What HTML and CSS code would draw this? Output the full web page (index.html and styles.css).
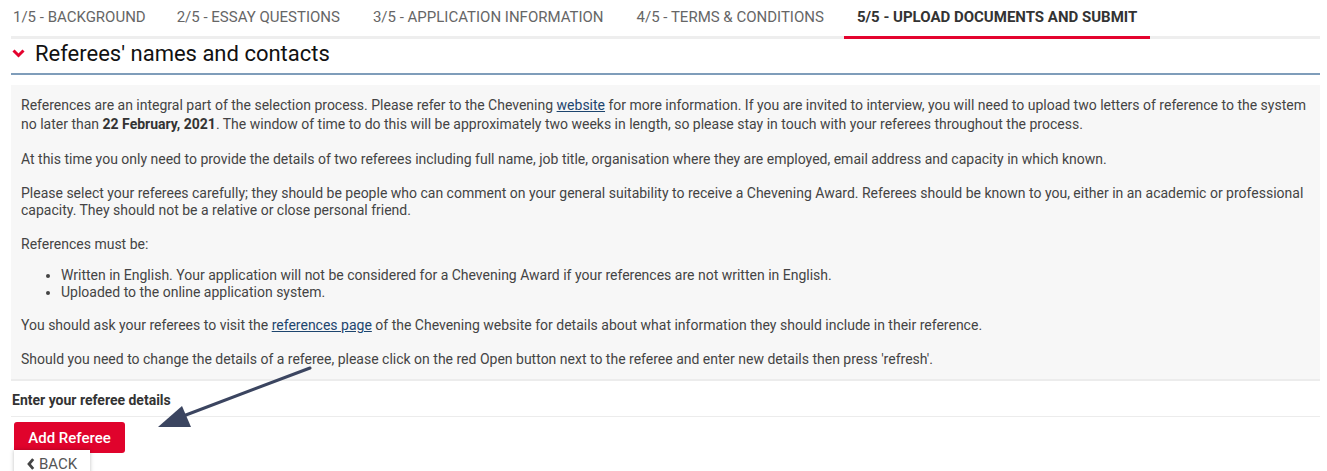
FILE: index.html
```html
<!DOCTYPE html>
<html lang="en">
<head>
<meta charset="utf-8">
<title>Referees</title>
<link rel="stylesheet" href="styles.css">
</head>
<body>
<div class="page">
  <nav class="tabs">
    <a class="tab tab-first">1/5 - BACKGROUND</a>
    <a class="tab">2/5 - ESSAY QUESTIONS</a>
    <a class="tab">3/5 - APPLICATION INFORMATION</a>
    <a class="tab">4/5 - TERMS &amp; CONDITIONS</a>
    <a class="tab tab-active">5/5 - UPLOAD DOCUMENTS AND SUBMIT</a>
  </nav>

  <h2 class="section-title">
    <svg class="chev" width="13" height="9" viewBox="0 0 13 9"><path d="M1.5 1.5 L6.5 6.5 L11.5 1.5" fill="none" stroke="#e4032e" stroke-width="3"/></svg>
    <span>Referees' names and contacts</span>
  </h2>

  <div class="info">
    <p class="first">References are an integral part of the selection process. Please refer to the Chevening <a class="link">website</a> for more information. If you are invited to interview, you will need to upload two letters of reference to the system no later than <b>22 February, 2021</b>. The window of time to do this will be approximately two weeks in length, so please stay in touch with your referees throughout the process.</p>
    <p>At this time you only need to provide the details of two referees including full name, job title, organisation where they are employed, email address and capacity in which known.</p>
    <p>Please select your referees carefully; they should be people who can comment on your general suitability to receive a Chevening Award. Referees should be known to you, either in an academic or professional capacity. They should not be a relative or close personal friend.</p>
    <p class="lead">References must be:</p>
    <ul>
      <li>Written in English. Your application will not be considered for a Chevening Award if your references are not written in English.</li>
      <li>Uploaded to the online application system.</li>
    </ul>
    <p>You should ask your referees to visit the <a class="link">references page</a> of the Chevening website for details about what information they should include in their reference.</p>
    <p class="last">Should you need to change the details of a referee, please click on the red Open button next to the referee and enter new details then press 'refresh'.</p>
  </div>

  <div class="enter">Enter your referee details</div>

  <div class="actions">
    <button class="btn-add">Add Referee</button>
    <div class="back">
      <svg width="8" height="12" viewBox="0 0 8 12"><path d="M6.2 1.2 L2 6 L6.2 10.8" fill="none" stroke="#444" stroke-width="2.8"/></svg>
      <span>BACK</span>
    </div>
  </div>

  <svg class="arrow" width="1327" height="471" viewBox="0 0 1327 471">
    <line x1="310" y1="368" x2="178" y2="418" stroke="#3b4560" stroke-width="3" stroke-linecap="round"/>
    <polygon points="158,427 182,406 191,427" fill="#3b4560"/>
  </svg>
</div>
</body>
</html>
```

FILE: styles.css
```css
* { box-sizing: border-box; }
html, body { margin: 0; padding: 0; background: #fff; }
body {
  font-family: Roboto, "Liberation Sans", Arial, sans-serif;
  color: #333;
  width: 1327px;
  height: 471px;
  overflow: hidden;
}
.page {
  position: relative;
  margin-left: 11px;
  width: 1309px;
}
.tabs {
  display: flex;
  border-bottom: 3px solid #eeeeee;
  height: 39px;
}
.tab {
  display: block;
  font-size: 15px;
  line-height: 34px;
  padding: 0 13px 2px;
  margin-right: 7px;
  color: #666;
  white-space: nowrap;
  text-decoration: none;
}
.tab-first { padding-left: 2px; margin-right: 5px; }
.tab-active {
  color: #333;
  font-weight: 700;
  border-bottom: 3px solid #e4032e;
  margin-bottom: -3px;
}
.section-title {
  margin: 0;
  display: flex;
  align-items: center;
  height: 36px;
  padding-bottom: 6px;
  border-bottom: 2px solid #7f9dba;
  font-weight: 400;
  font-size: 22px;
  color: #111;
  padding-left: 1px;
}
.chev { margin-right: 10px; margin-top: 0; }
.info {
  margin-top: 10px;
  background: #f7f7f7;
  border-bottom: 2px solid #ececec;
  padding: 11px 10px 11px;
  font-size: 14px;
  line-height: 17px;
  color: #444;
}
.info p { margin: 0 0 17px; }
.info p.first { line-height: 19px; margin-bottom: 17px; }
.info p.lead { margin-bottom: 14px; }
.info p.last { margin-bottom: 0; }
.info b { color: #333; }
.info ul { margin: 0 0 16px; padding-left: 40px; }
.link { color: #1d456e; text-decoration: underline; }
.enter {
  font-weight: 700;
  font-size: 14px;
  color: #333;
  padding: 11px 1px 8px;
  border-bottom: 1px solid #ececec;
}
.actions {
  padding-left: 3px;
  padding-top: 5px;
}
.btn-add {
  display: block;
  width: 111px;
  height: 31px;
  background: #e0032c;
  color: #fff;
  border: none;
  border-radius: 3px;
  font-family: Roboto, "Liberation Sans", Arial, sans-serif;
  font-size: 15px;
  font-weight: 500;
  padding: 0;
}
.back {
  display: flex;
  align-items: center;
  gap: 4px;
  width: 76px;
  height: 24px;
  margin-top: -3px;
  padding: 4px 0 0 13px;
  background: #fff;
  box-shadow: 0 0 4px rgba(0,0,0,0.25);
  font-size: 15px;
  color: #555;
}
.arrow {
  position: absolute;
  left: -11px;
  top: 0;
  pointer-events: none;
}
```
